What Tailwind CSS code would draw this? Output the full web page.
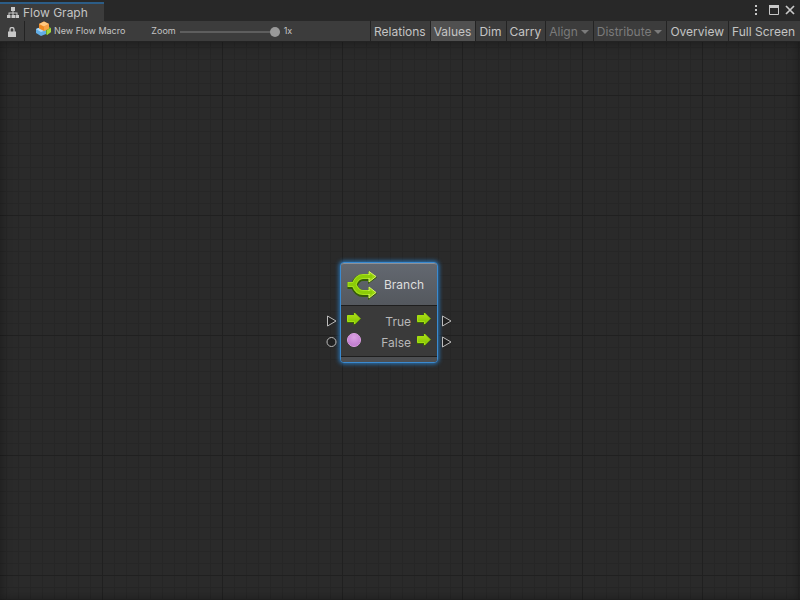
<!DOCTYPE html>
<html lang="en">
<head>
    <meta charset="UTF-8">
    <meta name="viewport" content="width=device-width, initial-scale=1.0">
    <title>Flow Graph</title>
    <script src="https://cdn.jsdelivr.net/npm/@tailwindcss/browser@4"></script>
</head>
<body class="flex flex-col min-h-screen bg-[#282828] font-['Inter',sans-serif] text-[12px] leading-4 text-[#c4c4c4]">

    <!-- Shared shapes -->
    <svg class="absolute size-0">
        <defs>
            <linearGradient id="green" x1="0" y1="0" x2="0" y2="1">
                <stop offset="0" stop-color="#b4e01a"/>
                <stop offset="1" stop-color="#7fc400"/>
            </linearGradient>
            <radialGradient id="pink" cx="0.5" cy="0.3" r="0.7">
                <stop offset="0" stop-color="#dca2e4"/>
                <stop offset="1" stop-color="#bd78cc"/>
            </radialGradient>
        </defs>
        <symbol id="arrow" viewBox="0 0 16 16">
            <path d="M1 4H7.500V1L15 8L7.500 15V12H1Z" fill="#3d6608"/>
            <path d="M1.500 4.500H8.500V2L14 7.500L8.500 13V10.500H1.500Z" fill="url(#green)" stroke="#a4e010" stroke-width="1"/>
        </symbol>
        <symbol id="port" viewBox="0 0 12 12">
            <path d="M1.500 1L10 6L1.500 11Z" fill="#202020" stroke="#bcbcbc"/>
        </symbol>
    </svg>

    <!-- Window tab bar -->
    <header class="flex h-[21px] justify-between bg-[#282828] pt-[2px]">
        <div class="flex w-[104px] items-center gap-1 border-t-2 border-[#2c5d87] bg-[#3c3c3c] pl-[7px]">
            <svg class="size-3" viewBox="0 0 12 12" fill="#c8c8c8">
                <path d="M4 0h4v4H6.500v1.500H10.500V8H12v3H8.500V8h1V6.500h-3V8H8v3H4.500V8h1V6.500h-3V8h1v3H0V8h1.500V5.500h4V4H4z"/>
            </svg>
            <h1>Flow Graph</h1>
        </div>
        <div class="flex items-center gap-1 pb-[3px] pr-1">
            <button type="button" aria-label="Menu">
                <svg class="h-3 w-4" viewBox="0 0 16 12" fill="#c8c8c8"><path d="M7 1h2v2H7zM7 5h2v2H7zM7 9h2v2H7z"/></svg>
            </button>
            <button type="button" aria-label="Maximize">
                <svg class="size-3" viewBox="0 0 12 12"><path d="M1.500 1.500h9v9h-9z" fill="none" stroke="#c8c8c8"/><path d="M1 1h10v3H1z" fill="#c8c8c8"/></svg>
            </button>
            <button type="button" aria-label="Close">
                <svg class="size-3" viewBox="0 0 12 12"><path d="M2 2l8 8M10 2l-8 8" stroke="#c8c8c8" stroke-width="1.700"/></svg>
            </button>
        </div>
    </header>

    <!-- Toolbar -->
    <nav class="flex h-[21px] border-b border-[#232323] bg-[#3c3c3c] pr-px">
        <button type="button" aria-label="Lock" class="flex w-[25px] items-center justify-center border-r border-[#232323] pt-px">
            <svg class="h-[10px] w-2" viewBox="0 0 8 10"><path d="M2 5V2.500a2 2 0 0 1 4 0V5" fill="none" stroke="#c8c8c8" stroke-width="1.300"/><path d="M0 4.500h8V10H0z" fill="#c8c8c8"/></svg>
        </button>
        <button type="button" class="flex items-center gap-[3px] pl-[10px] text-[9px]">
            <svg class="size-4 self-start" viewBox="0 0 16 16">
                <path d="M9 7l4-2 3 2v4l-4 3-3-2z" fill="#6aa52a"/>
                <path d="M12 9l4-2v4l-4 3z" fill="#a5d63c"/>
                <path d="M1 8l5-2 5 3v4l-5 2-5-3z" fill="#62aee6"/>
                <path d="M1 8l5-2 5 3-5 2z" fill="#b5dcf7"/>
                <path d="M4 3l5-2.500L14 3v4.500L9 10 4 7.500z" fill="#ee8a22"/>
                <path d="M4 3l5-2.500L14 3 9 5.500z" fill="#ffc880"/>
                <path d="M9 5.500L14 3v4.500L9 10z" fill="#f5a346"/>
            </svg>
            New Flow Macro
        </button>
        <div class="flex items-center gap-1 pl-[26px] text-[9px]">
            <label for="zoom">Zoom</label>
            <input id="zoom" type="range" min="0" max="1" step="0.1" value="1"
                   class="mt-px h-[10px] w-[100px] appearance-none bg-transparent bg-[linear-gradient(#5e5e5e,#5e5e5e)] bg-[length:100%_2px] bg-center bg-no-repeat [&::-webkit-slider-thumb]:size-[10px] [&::-webkit-slider-thumb]:appearance-none [&::-webkit-slider-thumb]:rounded-full [&::-webkit-slider-thumb]:bg-[#999999]">
            <output for="zoom">1x</output>
        </div>
        <div class="ml-auto flex whitespace-nowrap *:border-l *:border-[#232323] *:pl-[3px] *:pr-1 *:pt-px">
            <button type="button">Relations</button>
            <button type="button" class="bg-[#505050]">Values</button>
            <button type="button">Dim</button>
            <button type="button">Carry</button>
            <button type="button" class="flex items-center gap-[3px] text-[#7b7b7b]">Align
                <svg class="h-1 w-2" viewBox="0 0 8 4" fill="#7b7b7b"><path d="M0 0h8L4 4z"/></svg>
            </button>
            <button type="button" class="flex items-center gap-[3px] text-[#7b7b7b]">Distribute
                <svg class="h-1 w-2" viewBox="0 0 8 4" fill="#7b7b7b"><path d="M0 0h8L4 4z"/></svg>
            </button>
            <button type="button">Overview</button>
            <button type="button">Full Screen</button>
        </div>
    </nav>

    <!-- Graph canvas -->
    <main class="relative flex-1 bg-[#2a2a2a]">
        <svg class="absolute inset-0 size-full">
            <defs>
                <pattern id="minor" x="6" y="5" width="12" height="12" patternUnits="userSpaceOnUse">
                    <path d="M0.500 0V12M0 0.500H12" stroke="#262626"/>
                </pattern>
                <pattern id="major" x="102" y="53" width="120" height="120" patternUnits="userSpaceOnUse">
                    <path d="M0.500 0V120M0 0.500H120" stroke="#202020"/>
                </pattern>
            </defs>
            <rect width="100%" height="100%" fill="url(#minor)"/>
            <rect width="100%" height="100%" fill="url(#major)"/>
        </svg>
        <div class="absolute inset-0 shadow-[inset_0_0_12px_rgba(0,0,0,0.4)]"></div>

        <!-- Branch node -->
        <section class="absolute left-[340px] top-[220px] w-[98px] rounded-[4px] border border-[#3a8ad0] bg-[#3a3a3a] shadow-[0_0_4px_1px_#2a78bc]">
            <h2 class="flex h-[42px] items-center gap-[7px] rounded-t-[3px] border-t border-[#8b9097] bg-linear-to-b from-[#636870] to-[#54585e] pl-[6px] text-[#dedede]">
                <svg class="h-8 w-[30px]" viewBox="0 0 30 32" fill="none">
                    <path d="M0.500 16.500H7Q10 8.500 16 8.500H23M7 16.500Q10 24.500 16 24.500H23" stroke="#355c08" stroke-width="7"/>
                    <path d="M21 2L30 8.500L21 15ZM21 18L30 24.500L21 31Z" fill="#355c08"/>
                    <path d="M0.500 15.500H7Q10 7.500 16 7.500H23M7 15.500Q10 23.500 16 23.500H23" stroke="#a6e01c" stroke-width="5"/>
                    <path d="M22 2.500L29 7.500L22 13ZM22 18L29 23.500L22 29Z" fill="#98d80c" stroke="#d8f268"/>
                    <path d="M1.500 15.500H7Q10 7.500 16 7.500H25M7 15.500Q10 23.500 16 23.500H25" stroke="#8ccc08" stroke-width="3"/>
                </svg>
                Branch
            </h2>
            <div class="grid grid-cols-[1fr_auto] border-y border-[#1e1e1e] px-[5px] pb-[3px] pt-[5px] text-[#b8b8b8]">
                <svg class="size-4" role="img" aria-label="Enter"><use href="#arrow"/></svg>
                <div class="flex h-[21px] justify-end gap-[5px]"><span class="pt-[3px]">True</span><svg class="size-4"><use href="#arrow"/></svg></div>
                <svg class="size-4" viewBox="0 0 16 16"><circle cx="8" cy="8" r="6.500" fill="url(#pink)" stroke="#dda0e4"/></svg>
                <div class="flex h-[21px] justify-end gap-[5px]"><span class="pt-[3px]">False</span><svg class="size-4"><use href="#arrow"/></svg></div>
            </div>
            <div class="h-[5px] rounded-b-[3px] bg-[#4d4f52]"></div>
        </section>

        <!-- Ports beside the node -->
        <div class="absolute left-[326px] top-[273px] flex flex-col gap-[9px]">
            <svg class="size-3"><use href="#port"/></svg>
            <svg class="size-3" viewBox="0 0 12 12"><circle cx="5.500" cy="6" r="4.500" fill="#202020" stroke="#bcbcbc"/></svg>
        </div>
        <div class="absolute left-[441px] top-[273px] flex flex-col gap-[9px]">
            <svg class="size-3"><use href="#port"/></svg>
            <svg class="size-3"><use href="#port"/></svg>
        </div>
    </main>
</body>
</html>
